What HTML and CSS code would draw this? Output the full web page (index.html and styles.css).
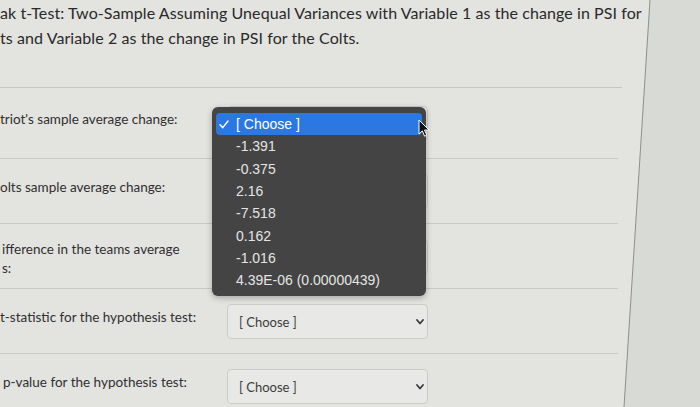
FILE: index.html
```html
<!DOCTYPE html>
<html lang="en">
<head>
<meta charset="utf-8">
<title>Matching question</title>
<link rel="stylesheet" href="styles.css">
</head>
<body>
<div class="screen">
  <div class="page">
    <div class="question-text">
      <p>ak t-Test: Two-Sample Assuming Unequal Variances with Variable 1 as the change in PSI for<br>ts and Variable 2 as the change in PSI for the Colts.</p>
    </div>
    <div class="answers">
      <div class="row row-first">
        <div class="label">triot's sample average change:</div>
        <div class="select"><span class="select-text"></span><svg class="chev" viewBox="0 0 8 6" width="8" height="6"><polyline points="1,1 4,4.5 7,1"/></svg></div>
      </div>
      <div class="row">
        <div class="label">olts sample average change:</div>
        <div class="select"><span class="select-text"></span><svg class="chev" viewBox="0 0 8 6" width="8" height="6"><polyline points="1,1 4,4.5 7,1"/></svg></div>
      </div>
      <div class="row">
        <div class="label label-cut">ifference in the teams average<br>s:</div>
        <div class="select"><span class="select-text"></span><svg class="chev" viewBox="0 0 8 6" width="8" height="6"><polyline points="1,1 4,4.5 7,1"/></svg></div>
      </div>
      <div class="row">
        <div class="label">t-statistic for the hypothesis test:</div>
        <div class="select"><span class="select-text">[ Choose ]</span><svg class="chev" viewBox="0 0 8 6" width="8" height="6"><polyline points="1,1 4,4.5 7,1"/></svg></div>
      </div>
      <div class="row row-last">
        <div class="label label-indent">p-value for the hypothesis test:</div>
        <div class="select"><span class="select-text">[ Choose ]</span><svg class="chev" viewBox="0 0 8 6" width="8" height="6"><polyline points="1,1 4,4.5 7,1"/></svg></div>
      </div>
    </div>
  </div>

  <svg class="edge" width="700" height="407" viewBox="0 0 700 407"><line x1="650" y1="0" x2="624" y2="407"/></svg>

  <ul class="menu">
    <li class="menu-item selected"><svg class="check" viewBox="0 0 10 9" width="10" height="9"><polyline points="1,4.8 3.8,7.6 9,1"/></svg>[ Choose ]</li>
    <li class="menu-item">-1.391</li>
    <li class="menu-item">-0.375</li>
    <li class="menu-item">2.16</li>
    <li class="menu-item">-7.518</li>
    <li class="menu-item">0.162</li>
    <li class="menu-item">-1.016</li>
    <li class="menu-item">4.39E-06 (0.00000439)</li>
  </ul>

  <svg class="cursor" viewBox="0 0 12 19" width="12" height="19"><path d="M1 1 L1 15 L4.3 11.9 L6.6 17.2 L8.8 16.2 L6.5 11 L11 11 Z"/></svg>
</div>
</body>
</html>
```

FILE: styles.css
```css
html, body {
  margin: 0;
  padding: 0;
}

body {
  width: 700px;
  height: 407px;
  overflow: hidden;
  background: #d8dad6;
  font-family: Lato, "Noto Sans", sans-serif;
  color: #2e2e2e;
}

.screen {
  position: relative;
  width: 700px;
  height: 407px;
  background: #d8dad6;
}

.page {
  height: 407px;
  background: #e3e3e0;
  clip-path: polygon(0 0, 650px 0, 624px 100%, 0 100%);
}

.question-text {
  width: 622px;
  border-bottom: 1px solid #c6c6c3;
  padding-bottom: 37px;
}

.question-text p {
  margin: 0;
  font-size: 16px;
  letter-spacing: 0.08px;
  line-height: 25px;
  white-space: nowrap;
  color: #2a2a2a;
}

.answers {
  width: 618px;
}

.row {
  display: flex;
  align-items: flex-start;
  padding: 15px 0 14px;
  border-bottom: 1px solid #c9c9c6;
}

.row-first {
  padding: 18px 0 17px;
}

.row-last {
  border-bottom: none;
}

.label {
  width: 227px;
  height: 32px;
  flex: none;
  box-sizing: content-box;
  padding-top: 3px;
  font-size: 13.5px;
  line-height: 20px;
  color: #303030;
  white-space: nowrap;
}

.label-cut {
  width: 225px;
  padding-top: 1px;
  padding-left: 2px;
  height: 34px;
  line-height: 19px;
}

.label-indent {
  width: 224px;
  padding-left: 3px;
}

.select {
  box-sizing: border-box;
  width: 201px;
  height: 35px;
  display: flex;
  align-items: center;
  justify-content: space-between;
  padding: 0 3px 0 11px;
  border: 1px solid #cbcbc8;
  border-radius: 4px;
  background: #e8e8e6;
  font-size: 13px;
  color: #3c3c3c;
}

.chev polyline {
  fill: none;
  stroke: #3a3a3a;
  stroke-width: 1.8;
  stroke-linecap: round;
  stroke-linejoin: round;
}

.edge {
  position: absolute;
  left: 0;
  top: 0;
  pointer-events: none;
}

.edge line {
  stroke: #8d8f8b;
  stroke-width: 1;
}

.menu {
  position: absolute;
  left: 212px;
  top: 107px;
  width: 214px;
  box-sizing: border-box;
  margin: 0;
  padding: 6px 4px 5px;
  list-style: none;
  background: #444444;
  border-radius: 6px;
  box-shadow: 0 2px 6px rgba(0, 0, 0, 0.28);
  font-family: "Liberation Sans", Arial, sans-serif;
  font-size: 14px;
  color: #e4e4e4;
}

.menu-item {
  display: flex;
  align-items: center;
  height: 22.3px;
  padding-left: 20px;
  border-radius: 4px;
  white-space: nowrap;
}

.menu-item.selected {
  position: relative;
  background: #2b78e2;
  color: #ffffff;
}

.check {
  position: absolute;
  left: 3px;
  top: 7px;
}

.check polyline {
  fill: none;
  stroke: #ffffff;
  stroke-width: 1.5;
  stroke-linecap: round;
  stroke-linejoin: round;
}

.cursor {
  position: absolute;
  left: 418px;
  top: 119px;
}

.cursor path {
  fill: #111111;
  stroke: #ffffff;
  stroke-width: 1;
  stroke-linejoin: round;
}
```
